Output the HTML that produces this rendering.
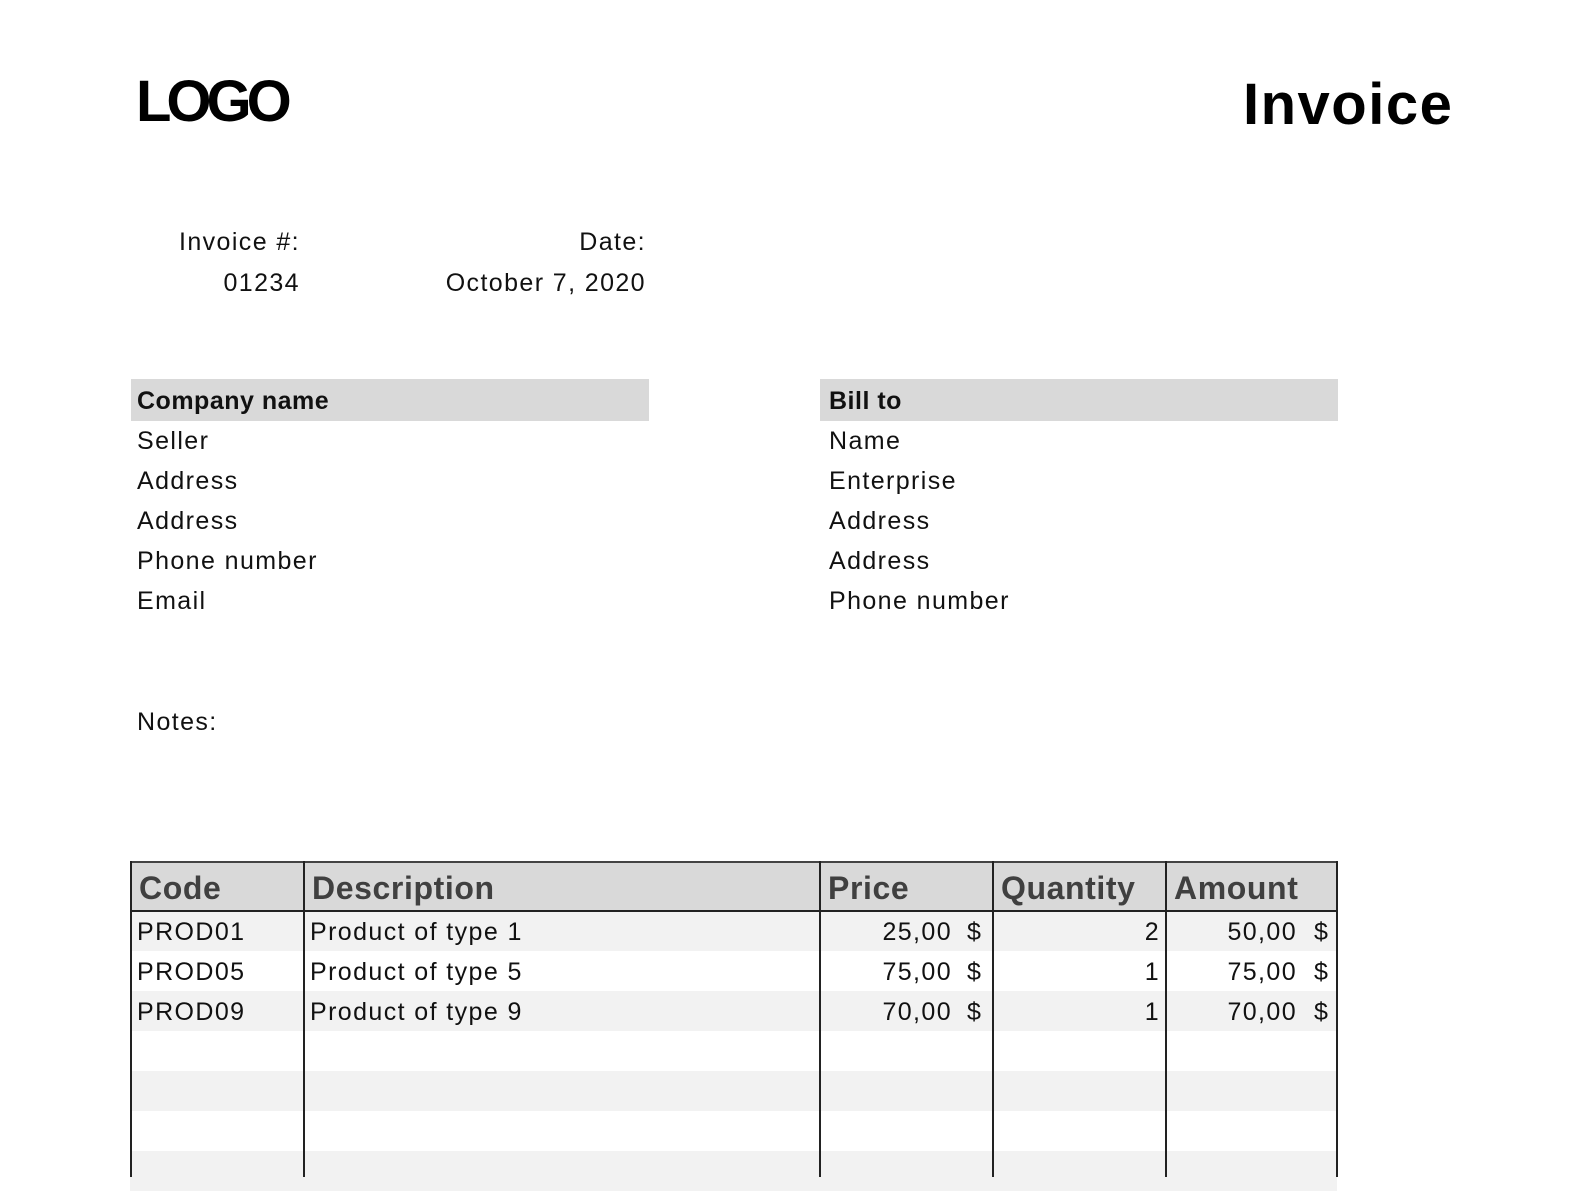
<!DOCTYPE html>
<html><head><meta charset="utf-8"><style>
body{margin:0;width:1588px;height:1177px;background:#fff;position:relative;overflow:hidden;font-family:"Liberation Sans",sans-serif;color:#111}
.a{position:absolute;white-space:nowrap;font-size:25px;line-height:25px;letter-spacing:1.4px}
.r{text-align:right}
.band{position:absolute;background:#d9d9d9;height:42px;top:379px}
.b{font-weight:bold;letter-spacing:0.5px}
.row{position:absolute;left:130px;width:1207px;height:40px}
.g{background:#f2f2f2}
.vl{position:absolute;top:861px;width:2px;height:316px;background:#222}
.th{position:absolute;top:872px;font-size:32px;line-height:32px;font-weight:bold;color:#404040;letter-spacing:0.6px}
</style></head><body>
<div class="a b" style="left:136px;top:73px;font-size:58px;line-height:58px;letter-spacing:-5px;color:#000">LOGO</div>
<div class="a b" style="left:1243px;top:76px;font-size:58px;line-height:58px;letter-spacing:1.5px;color:#000">Invoice</div>

<div class="a r" style="right:1288px;top:230px">Invoice #:</div>
<div class="a r" style="right:1288px;top:271px">01234</div>
<div class="a r" style="right:942px;top:230px">Date:</div>
<div class="a r" style="right:942px;top:271px">October 7, 2020</div>

<div class="band" style="left:131px;width:518px"></div>
<div class="band" style="left:820px;width:518px"></div>
<div class="a b" style="left:137px;top:389px">Company name</div>
<div class="a" style="left:137px;top:429px">Seller</div>
<div class="a" style="left:137px;top:469px">Address</div>
<div class="a" style="left:137px;top:509px">Address</div>
<div class="a" style="left:137px;top:549px">Phone number</div>
<div class="a" style="left:137px;top:589px">Email</div>
<div class="a b" style="left:829px;top:389px">Bill to</div>
<div class="a" style="left:829px;top:429px">Name</div>
<div class="a" style="left:829px;top:469px">Enterprise</div>
<div class="a" style="left:829px;top:509px">Address</div>
<div class="a" style="left:829px;top:549px">Address</div>
<div class="a" style="left:829px;top:589px">Phone number</div>

<div class="a" style="left:137px;top:710px">Notes:</div>

<div class="row" style="top:861px;height:50px;background:#d9d9d9;border-top:2px solid #444;box-sizing:border-box"></div>
<div class="row" style="top:910px;height:2px;background:#222"></div>
<div class="row g" style="top:912px;height:39px"></div>
<div class="row g" style="top:991px"></div>
<div class="row g" style="top:1071px"></div>
<div class="row g" style="top:1151px"></div>
<div class="vl" style="left:130px"></div>
<div class="vl" style="left:303px"></div>
<div class="vl" style="left:819px"></div>
<div class="vl" style="left:992px"></div>
<div class="vl" style="left:1165px"></div>
<div class="vl" style="left:1336px"></div>

<div class="th" style="left:139px">Code</div>
<div class="th" style="left:312px">Description</div>
<div class="th" style="left:828px">Price</div>
<div class="th" style="left:1001px">Quantity</div>
<div class="th" style="left:1174px">Amount</div>

<div class="a" style="left:137px;top:920px">PROD01</div>
<div class="a" style="left:137px;top:960px">PROD05</div>
<div class="a" style="left:137px;top:1000px">PROD09</div>
<div class="a" style="left:310px;top:920px">Product of type 1</div>
<div class="a" style="left:310px;top:960px">Product of type 5</div>
<div class="a" style="left:310px;top:1000px">Product of type 9</div>

<div class="a r" style="right:636px;top:920px">25,00</div>
<div class="a r" style="right:636px;top:960px">75,00</div>
<div class="a r" style="right:636px;top:1000px">70,00</div>
<div class="a" style="left:967px;top:920px">$</div>
<div class="a" style="left:967px;top:960px">$</div>
<div class="a" style="left:967px;top:1000px">$</div>
<div class="a r" style="right:428px;top:920px">2</div>
<div class="a r" style="right:428px;top:960px">1</div>
<div class="a r" style="right:428px;top:1000px">1</div>
<div class="a r" style="right:291px;top:920px">50,00</div>
<div class="a r" style="right:291px;top:960px">75,00</div>
<div class="a r" style="right:291px;top:1000px">70,00</div>
<div class="a" style="left:1314px;top:920px">$</div>
<div class="a" style="left:1314px;top:960px">$</div>
<div class="a" style="left:1314px;top:1000px">$</div>
</body></html>
